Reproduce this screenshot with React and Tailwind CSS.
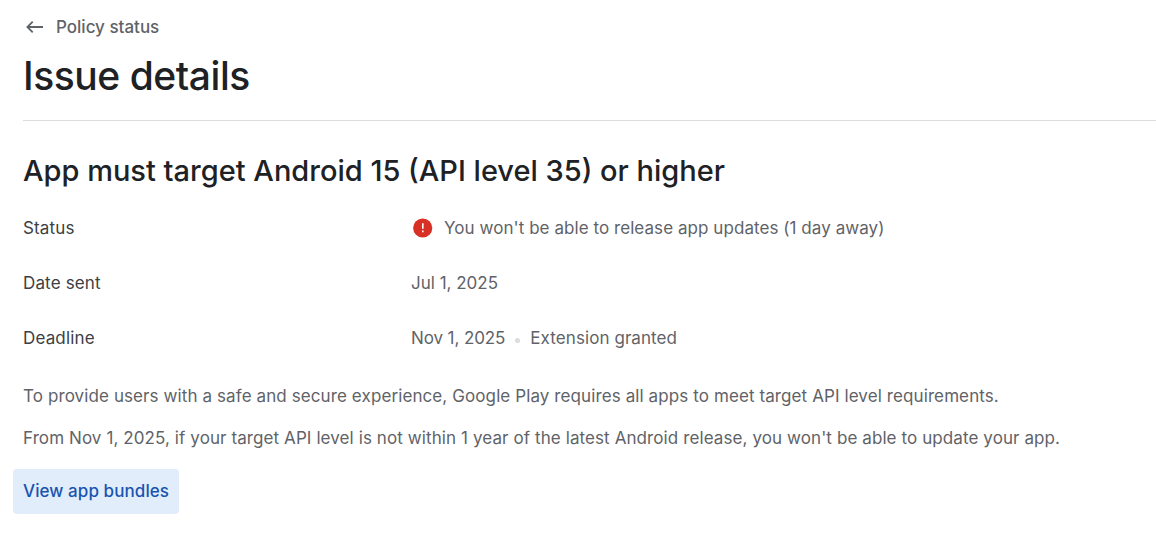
const rowLabel = "w-[388px] shrink-0 pt-[2px] text-[#3c4043]";

function BackArrow() {
  return (
    <svg width="18" height="14" viewBox="0 0 18 14" fill="none" stroke="#5f6368" strokeWidth="1.8">
      <path d="M17 7H1.5M6.7 1.7L1.4 7L6.7 12.3" />
    </svg>
  );
}

function ErrorIcon() {
  return (
    <svg className="-mt-[2px] ml-[2px]" width="20" height="20" viewBox="0 0 20 20">
      <circle cx="9.7" cy="10" r="9.6" fill="#d93025" />
      <path d="M9 5.2h1.6v5.6H9zM9 12.6h1.6v1.7H9z" fill="#fff" />
    </svg>
  );
}

function Row({ label, children }) {
  return (
    <div className="flex h-[55px] items-center">
      <dt className={rowLabel}>
        <span className="tracking-[0.15px]">{label}</span>
      </dt>
      <dd className="flex items-center pt-[2px] text-[#5f6368]">{children}</dd>
    </div>
  );
}

export default function App() {
  return (
    <main className="h-[547px] overflow-hidden bg-white pl-[23px] font-['Inter',sans-serif] text-[17px] whitespace-nowrap">
      <a className="flex h-[54px] items-center gap-[12px] pl-[3px] font-medium text-[#5f6368]">
        <BackArrow />
        <span className="pt-[2px]">Policy status</span>
      </a>
      <h1 className="h-[66px] text-[39px] leading-[44px] font-medium tracking-[-0.45px] text-[#202124]">
        <span>Issue details</span>
      </h1>
      <hr className="border-[#dadce0]" />
      <h2 className="mt-[32px] h-[47px] text-[29px] leading-[36px] font-medium text-[#202124]">
        <span>App must target Android 15 (API level 35) or higher</span>
      </h2>
      <dl>
        <Row label="Status">
          <ErrorIcon />
          <span className="ml-[11px] tracking-[0.06px]">You won't be able to release app updates (1 day away)</span>
        </Row>
        <Row label="Date sent">
          <span>Jul 1, 2025</span>
        </Row>
        <Row label="Deadline">
          <span className="tracking-[-0.1px]">Nov 1, 2025</span>
          <span className="mx-[10px] mt-[3px] size-[5px] rounded-full bg-[#dadce0]" />
          <span className="tracking-[0.08px]">Extension granted</span>
        </Row>
      </dl>
      <p className="mt-[19px] leading-[24px] tracking-[0.1px] text-[#5f6368]">
        <span>To provide users with a safe and secure experience, Google Play requires all apps to meet target API level requirements.</span>
      </p>
      <p className="mt-[18px] leading-[24px] tracking-[0.095px] text-[#5f6368]">
        <span>From Nov 1, 2025, if your target API level is not within 1 year of the latest Android release, you won't be able to update your app.</span>
      </p>
      <button className="-ml-[10px] mt-[19px] flex h-[45px] w-[166px] items-center rounded-[4px] bg-[#e1edfb] pl-[10px] font-medium tracking-[0.08px] text-[#1a53b0]">
        <span>View app bundles</span>
      </button>
    </main>
  );
}
